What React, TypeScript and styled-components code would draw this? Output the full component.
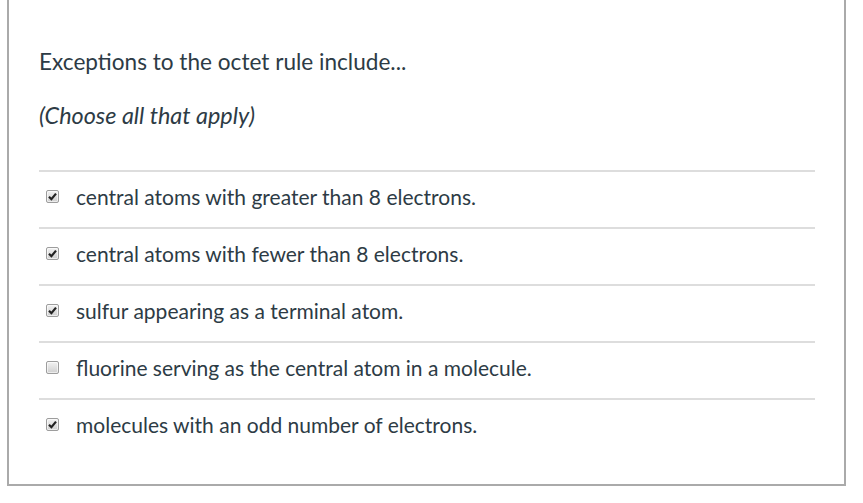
import React, { useState } from "react";
import styled, { createGlobalStyle } from "styled-components";

const GlobalStyle = createGlobalStyle`
  *, *::before, *::after {
    box-sizing: border-box;
  }
  html, body {
    margin: 0;
    padding: 0;
    background: #fff;
  }
  body {
    font-family: Lato, "Open Sans", sans-serif;
    color: #2d3b45;
  }
`;

const Page = styled.div`
  padding: 0 17px 0 7px;
`;

const Panel = styled.section`
  height: 486px;
  border: 2px solid #aaaaaa;
  border-top: none;
  padding: 48px 29px 0 30px;
  background: #fff;
`;

const Question = styled.h2`
  margin: 0;
  font-size: 22.6px;
  font-weight: 400;
  line-height: 28px;
`;

const Hint = styled.p`
  margin: 26px 0 0;
  font-size: 23.4px;
  font-style: italic;
  line-height: 26px;
`;

const Answers = styled.ul`
  list-style: none;
  margin: 42px 0 0;
  padding: 0;
`;

const Answer = styled.li`
  display: flex;
  align-items: center;
  gap: 17px;
  height: 57px;
  padding: 0 0 6px 7px;
  border-top: 2px solid #dddddd;
  font-size: 21px;
  cursor: pointer;
`;

const Box = styled.span<{ $checked: boolean }>`
  flex: none;
  width: 13px;
  height: 13px;
  margin-top: -1px;
  border: 1px solid #9d9d9d;
  border-radius: 2px;
  background: linear-gradient(#f2f2f2, #cfcfcf);
  box-shadow: inset 0 0 0 1px rgba(255, 255, 255, 0.6);
  display: flex;
  align-items: center;
  justify-content: center;
  svg {
    display: ${(p) => (p.$checked ? "block" : "none")};
  }
`;

const Label = styled.span`
  white-space: nowrap;
`;

const options = [
  { text: "central atoms with greater than 8 electrons.", checked: true },
  { text: "central atoms with fewer than 8 electrons.", checked: true },
  { text: "sulfur appearing as a terminal atom.", checked: true },
  { text: "fluorine serving as the central atom in a molecule.", checked: false },
  { text: "molecules with an odd number of electrons.", checked: true },
];

export default function App() {
  const [picked, setPicked] = useState(options.map((o) => o.checked));

  const toggle = (i: number) =>
    setPicked((prev) => prev.map((v, j) => (j === i ? !v : v)));

  return (
    <Page>
      <GlobalStyle />
      <Panel>
        <Question>Exceptions to the octet rule include...</Question>
        <Hint>(Choose all that apply)</Hint>
        <Answers>
          {options.map((o, i) => (
            <Answer key={o.text} onClick={() => toggle(i)}>
              <Box $checked={picked[i]} role="checkbox" aria-checked={picked[i]}>
                <svg width="9" height="9" viewBox="0 0 9 9">
                  <path
                    d="M1 4.8 L3.4 7.2 L8 1.6"
                    fill="none"
                    stroke="#222"
                    strokeWidth="2.2"
                  />
                </svg>
              </Box>
              <Label>{o.text}</Label>
            </Answer>
          ))}
        </Answers>
      </Panel>
    </Page>
  );
}
